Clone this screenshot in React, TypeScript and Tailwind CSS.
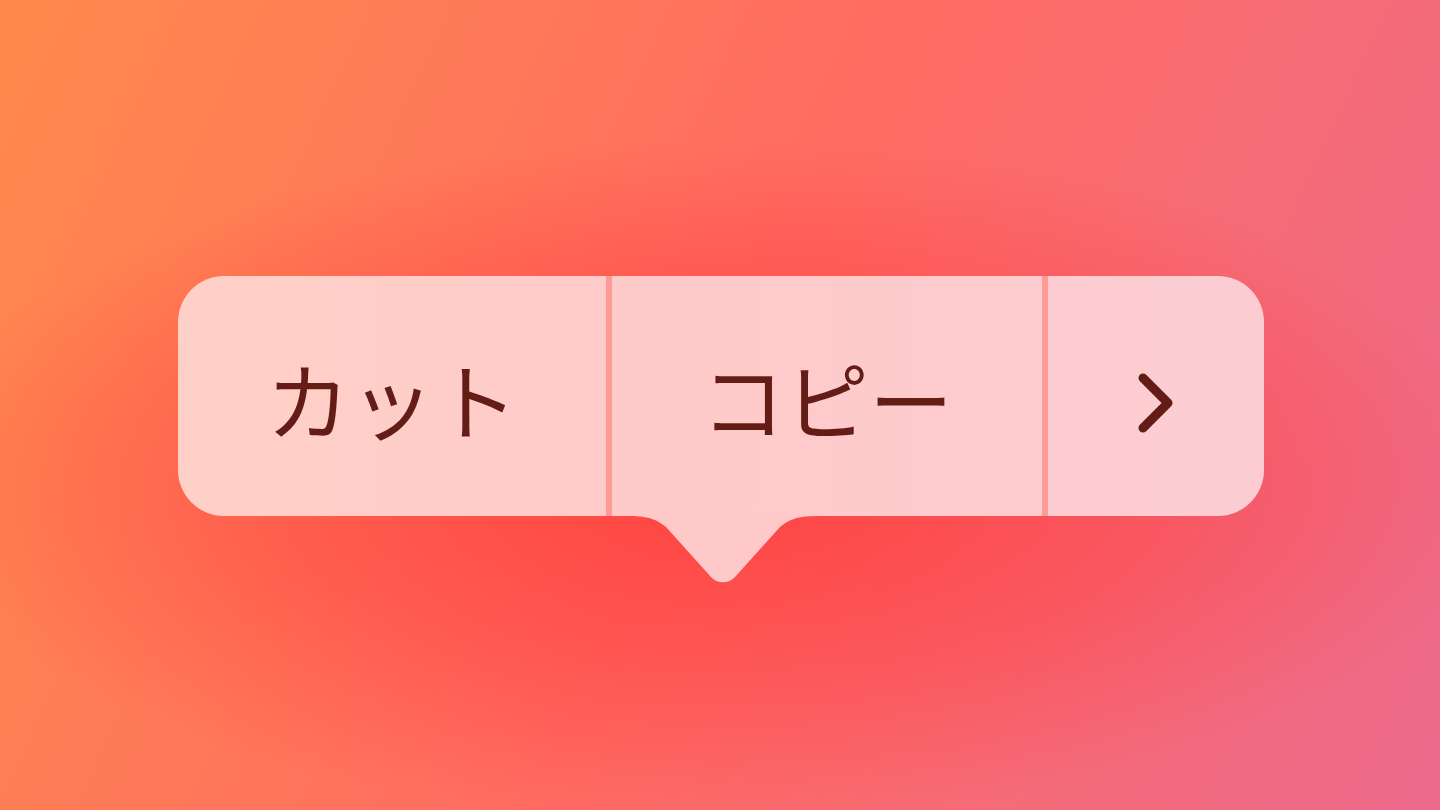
import React from 'react';

const font = { fontFamily: '"Noto Sans CJK JP", "Noto Sans", sans-serif' };

const Divider = () => <div className="w-[6px] self-stretch bg-[#ff9b96]" />;

export default function App() {
  return (
    <div className="relative h-[810px] w-[1440px] overflow-hidden bg-linear-[115deg] from-[#ff8a4c] via-[#ff6c62] to-[#ec6a8c]">
      {/* red glow behind the menu */}
      <div className="absolute inset-0 bg-[radial-gradient(ellipse_800px_340px_at_710px_480px,rgba(255,50,50,0.7)_0%,rgba(255,55,60,0.4)_55%,rgba(255,60,60,0)_100%)]" />

      <div className="relative pl-[178px] pt-[276px]">
        <div className="relative w-[1086px]">
          <div
            className="flex h-[240px] items-stretch overflow-hidden rounded-[46px] bg-linear-to-r from-[#ffd0c7] via-[#ffcaca] to-[#fbcdd3] text-[#641c16]"
            style={font}
          >
            <button className="flex w-[428px] items-center justify-center pt-[4px] text-[84px] leading-none">
              カット
            </button>
            <Divider />
            <button className="flex w-[430px] items-center justify-center pt-[4px] text-[84px] leading-none">
              コピー
            </button>
            <Divider />
            <button className="flex flex-1 items-center justify-center pl-[6px] pt-[16px]">
              <svg width="48" height="64" viewBox="0 0 48 64" fill="none">
                <polyline
                  points="8,6 33,31 8,56"
                  stroke="#641c16"
                  strokeWidth="9"
                  strokeLinecap="round"
                  strokeLinejoin="round"
                />
              </svg>
            </button>
          </div>

          {/* tail */}
          <svg
            className="absolute left-[444px] top-[238px]"
            width="202"
            height="72"
            viewBox="0 -2 202 72"
          >
            <path
              d="M0 -2 L0 0 C22 0 32 1 44 11 L89 61 C95 68 107 68 113 61 L158 11 C170 1 180 0 202 0 L202 -2 Z"
              fill="#ffc9c9"
            />
          </svg>
        </div>
      </div>
    </div>
  );
}
